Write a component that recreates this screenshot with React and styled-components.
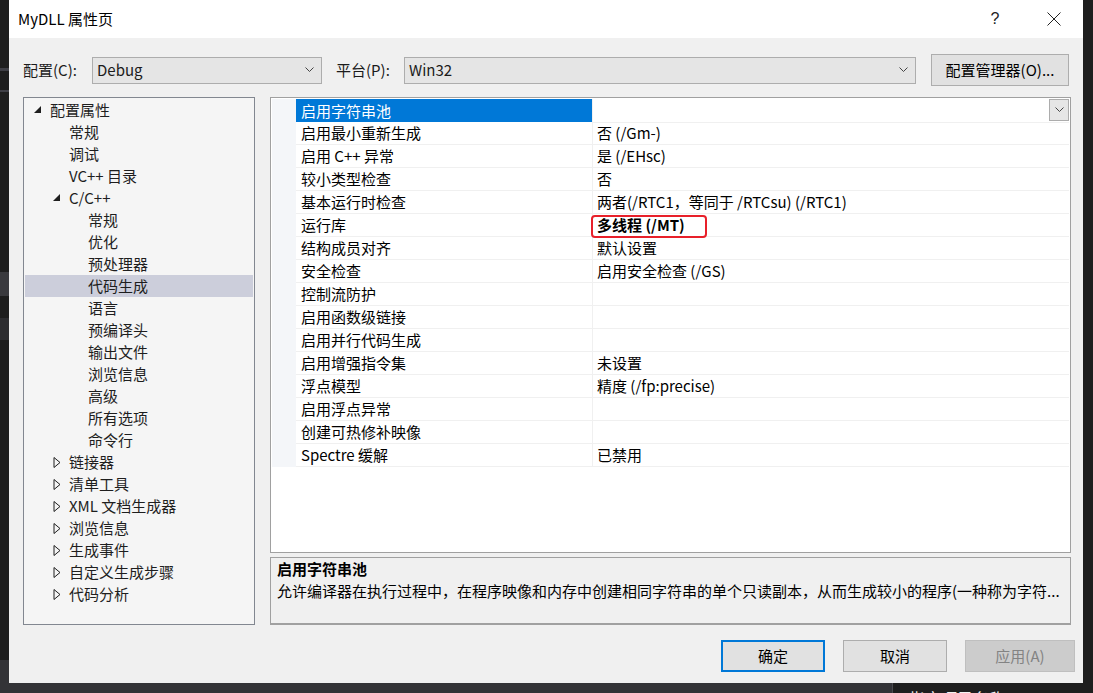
import React from "react";
import styled, { createGlobalStyle } from "styled-components";

const FONT = `"Noto Sans CJK SC", "Noto Sans", "Liberation Sans", sans-serif`;

const Global = createGlobalStyle`
  html, body { margin: 0; padding: 0; background: #1e1e1e; }
  body { font-family: ${FONT}; }
  #root { width: 1093px; height: 693px; }
  * { box-sizing: border-box; }
`;

const Desktop = styled.div`
  position: relative;
  width: 1093px;
  height: 693px;
  overflow: hidden;
  background: #1e1e1e;
`;

const BackStrip = styled.div`
  position: absolute;
  left: 0;
  top: ${(p) => p.$top}px;
  width: ${(p) => p.$w}px;
  height: ${(p) => p.$h}px;
  background: ${(p) => p.$bg};
`;

const BackBottom = styled.div`
  position: absolute;
  left: 0;
  top: 683px;
  width: 1093px;
  height: 10px;
  display: flex;
  overflow: hidden;
`;

const BackBottomLeft = styled.div`
  width: 893px;
  background: #333337;
  border-right: 1px solid #4a4a4f;
`;

const BackBottomRight = styled.div`
  flex: 1;
  background: #1e1e1e;
  color: #f1f1f1;
  font-size: 16px;
  line-height: 22px;
  padding-left: 16px;
  padding-top: 4px;
  white-space: nowrap;
  overflow: hidden;
`;

const Dialog = styled.div`
  position: absolute;
  left: 9px;
  top: 0;
  width: 1074px;
  height: 683px;
  background: #f0f0f0;
  display: flex;
  flex-direction: column;
  font-family: ${FONT};
  color: #1b1b1b;
`;

const TitleBar = styled.div`
  height: 38px;
  flex: none;
  background: #ffffff;
  display: flex;
  align-items: center;
  padding-left: 9px;
  padding-right: 6px;
  gap: 13px;
`;

const Title = styled.div`
  flex: 1;
  font-size: 15px;
  line-height: 20px;
  padding-bottom: 1px;
  color: #000;
`;

const TitleButton = styled.div`
  width: 46px;
  height: 38px;
  display: flex;
  align-items: center;
  justify-content: center;
  font-size: 16px;
  color: #222;
  font-family: "Liberation Sans", sans-serif;
`;

const Body = styled.div`
  flex: 1;
  display: flex;
  flex-direction: column;
  padding: 16px 12px 11px 14px;
`;

const ConfigRow = styled.div`
  height: 32px;
  flex: none;
  display: flex;
  align-items: center;
`;

const Label = styled.div`
  flex: none;
  width: ${(p) => p.$w}px;
  margin-left: ${(p) => p.$ml || 0}px;
  font-size: 15px;
  line-height: 20px;
  padding-bottom: 1px;
`;

const Combo = styled.div`
  flex: none;
  width: ${(p) => p.$w}px;
  height: 27px;
  background: #e5e5e5;
  border: 1px solid #adadad;
  display: flex;
  align-items: center;
  padding: 0 7px 0 4px;
  font-size: 15px;
`;

const ComboText = styled.div`
  flex: 1;
  line-height: 20px;
  padding-bottom: 1px;
`;

const Button = styled.div`
  flex: none;
  width: ${(p) => p.$w}px;
  height: 32px;
  margin-left: ${(p) => p.$ml || 0}px;
  display: flex;
  align-items: center;
  justify-content: center;
  font-size: 15px;
  line-height: 20px;
  white-space: nowrap;
  background: ${(p) => (p.$disabled ? "#cccccc" : "#e1e1e1")};
  color: ${(p) => (p.$disabled ? "#838383" : "#000")};
  border: ${(p) =>
    p.$primary ? "2px solid #0078d7" : p.$disabled ? "1px solid #bfbfbf" : "1px solid #adadad"};
`;

const Main = styled.div`
  margin-top: 11px;
  height: 528px;
  flex: none;
  display: flex;
  gap: 15px;
`;

const Tree = styled.div`
  flex: none;
  width: 232px;
  border: 1px solid #828790;
  background: #f5f5f5;
  padding: 1px;
`;

const TreeRow = styled.div`
  height: 22px;
  display: flex;
  align-items: center;
  padding-left: ${(p) => 9 + p.$level * 19}px;
  padding-bottom: 1px;
  background: ${(p) => (p.$selected ? "#cccedb" : "transparent")};
  font-size: 15px;
  color: #1e1e1e;
  white-space: nowrap;
`;

const Arrow = styled.div`
  flex: none;
  width: 16px;
  height: 22px;
  padding-top: 1px;
  display: flex;
  align-items: center;
`;

const RightCol = styled.div`
  flex: 1;
  min-width: 0;
  display: flex;
  flex-direction: column;
  gap: 4px;
`;

const Grid = styled.div`
  height: 456px;
  flex: none;
  border: 1px solid #a0a0a0;
  background: #ffffff;
  padding: 1px;
`;

const GridRow = styled.div`
  height: 23px;
  display: grid;
  grid-template-columns: 24px 297px 1fr;
  font-size: 15px;
`;

const Margin = styled.div`
  background: #f4f6f9;
`;

const NameCell = styled.div`
  border-right: 1px solid #f0f0f0;
  border-bottom: 1px solid #f0f0f0;
  padding: 0 0 1px 5px;
  display: flex;
  align-items: center;
  background: ${(p) => (p.$selected ? "#0078d7" : "#fff")};
  color: ${(p) => (p.$selected ? "#fff" : "#000")};
  white-space: nowrap;
`;

const ValueCell = styled.div`
  position: relative;
  border-bottom: 1px solid #f0f0f0;
  padding: 0 0 1px 4px;
  display: flex;
  align-items: center;
  color: #000;
  font-weight: ${(p) => (p.$bold ? 700 : 400)};
  white-space: nowrap;
`;

const ValueText = styled.div`
  flex: 1;
`;

const DropButton = styled.div`
  width: 20px;
  height: 22px;
  background: #e6e6e6;
  border: 1px solid #acacac;
  display: flex;
  align-items: center;
  justify-content: center;
`;

const Highlight = styled.div`
  position: absolute;
  left: -2px;
  top: 1px;
  width: 116px;
  height: 23px;
  border: 2px solid #e8202a;
  border-radius: 4px;
  pointer-events: none;
`;

const Desc = styled.div`
  flex: 1;
  min-width: 0;
  border: 1px solid #a0a0a0;
  border-bottom: 2px solid #a0a0a0;
  background: #f0f0f0;
  padding: 0 6px 0 6px;
  font-size: 15px;
`;

const DescTitle = styled.div`
  font-weight: 700;
  line-height: 22px;
  color: #000;
`;

const DescText = styled.div`
  line-height: 22px;
  white-space: nowrap;
  overflow: hidden;
  color: #000;
`;

const Footer = styled.div`
  margin-top: 15px;
  margin-right: -4px;
  display: flex;
  justify-content: flex-end;
  gap: 18px;
`;

const Chevron = ({ w = 9 }) => (
  <svg width={w} height="6" viewBox="0 0 9 6">
    <polyline points="0.5,0.5 4.5,4.5 8.5,0.5" fill="none" stroke="#444" strokeWidth="1" />
  </svg>
);

const Expanded = () => (
  <svg width="8" height="8" viewBox="0 0 8 8">
    <polygon points="7,0 7,7 0,7" fill="#1e1e1e" />
  </svg>
);

const Collapsed = () => (
  <svg width="8" height="11" viewBox="0 0 8 11">
    <polygon points="1,0.5 7,5.5 1,10.5" fill="none" stroke="#1e1e1e" strokeWidth="1" />
  </svg>
);

const CloseIcon = () => (
  <svg width="14" height="14" viewBox="0 0 14 14">
    <path d="M0.5 0.5 L13.5 13.5 M13.5 0.5 L0.5 13.5" stroke="#222" strokeWidth="1" />
  </svg>
);

const tree = [
  { t: "配置属性", l: 0, a: "e" },
  { t: "常规", l: 1 },
  { t: "调试", l: 1 },
  { t: "VC++ 目录", l: 1 },
  { t: "C/C++", l: 1, a: "e" },
  { t: "常规", l: 2 },
  { t: "优化", l: 2 },
  { t: "预处理器", l: 2 },
  { t: "代码生成", l: 2, s: true },
  { t: "语言", l: 2 },
  { t: "预编译头", l: 2 },
  { t: "输出文件", l: 2 },
  { t: "浏览信息", l: 2 },
  { t: "高级", l: 2 },
  { t: "所有选项", l: 2 },
  { t: "命令行", l: 2 },
  { t: "链接器", l: 1, a: "c" },
  { t: "清单工具", l: 1, a: "c" },
  { t: "XML 文档生成器", l: 1, a: "c" },
  { t: "浏览信息", l: 1, a: "c" },
  { t: "生成事件", l: 1, a: "c" },
  { t: "自定义生成步骤", l: 1, a: "c" },
  { t: "代码分析", l: 1, a: "c" },
];

const props = [
  ["启用字符串池", ""],
  ["启用最小重新生成", "否 (/Gm-)"],
  ["启用 C++ 异常", "是 (/EHsc)"],
  ["较小类型检查", "否"],
  ["基本运行时检查", "两者(/RTC1，等同于 /RTCsu) (/RTC1)"],
  ["运行库", "多线程 (/MT)"],
  ["结构成员对齐", "默认设置"],
  ["安全检查", "启用安全检查 (/GS)"],
  ["控制流防护", ""],
  ["启用函数级链接", ""],
  ["启用并行代码生成", ""],
  ["启用增强指令集", "未设置"],
  ["浮点模型", "精度 (/fp:precise)"],
  ["启用浮点异常", ""],
  ["创建可热修补映像", ""],
  ["Spectre 缓解", "已禁用"],
];

export default function App() {
  return (
    <Desktop>
      <Global />
      <BackStrip $top={68} $w={9} $h={3} $bg="#3f3f46" />
      <BackStrip $top={90} $w={9} $h={2} $bg="#3f3f46" />
      <BackStrip $top={272} $w={9} $h={24} $bg="#3a3a3e" />
      <BackStrip $top={318} $w={9} $h={22} $bg="#2d2d30" />
      <BackStrip $top={660} $w={9} $h={33} $bg="#333337" />
      <BackBottom>
        <BackBottomLeft />
        <BackBottomRight>指定项目名称</BackBottomRight>
      </BackBottom>
      <Dialog>
        <TitleBar>
          <Title>MyDLL 属性页</Title>
          <TitleButton>?</TitleButton>
          <TitleButton>
            <CloseIcon />
          </TitleButton>
        </TitleBar>
        <Body>
          <ConfigRow>
            <Label $w={69}>配置(C):</Label>
            <Combo $w={230}>
              <ComboText>Debug</ComboText>
              <Chevron />
            </Combo>
            <Label $w={68} $ml={14}>平台(P):</Label>
            <Combo $w={512}>
              <ComboText>Win32</ComboText>
              <Chevron />
            </Combo>
            <Button $w={138} $ml={15}>配置管理器(O)...</Button>
          </ConfigRow>
          <Main>
            <Tree>
              {tree.map((n, i) => (
                <TreeRow key={i} $level={n.l} $selected={n.s}>
                  <Arrow>{n.a === "e" ? <Expanded /> : n.a === "c" ? <Collapsed /> : null}</Arrow>
                  {n.t}
                </TreeRow>
              ))}
            </Tree>
            <RightCol>
              <Grid>
                {props.map(([name, value], i) => (
                  <GridRow key={i}>
                    <Margin />
                    <NameCell $selected={i === 0}>{name}</NameCell>
                    <ValueCell $bold={i === 5}>
                      <ValueText>{value}</ValueText>
                      {i === 0 && (
                        <DropButton>
                          <Chevron w={9} />
                        </DropButton>
                      )}
                      {i === 5 && <Highlight />}
                    </ValueCell>
                  </GridRow>
                ))}
              </Grid>
              <Desc>
                <DescTitle>启用字符串池</DescTitle>
                <DescText>
                  允许编译器在执行过程中，在程序映像和内存中创建相同字符串的单个只读副本，从而生成较小的程序(一种称为字符...
                </DescText>
              </Desc>
            </RightCol>
          </Main>
          <Footer>
            <Button $w={104} $primary>确定</Button>
            <Button $w={104}>取消</Button>
            <Button $w={110} $disabled>应用(A)</Button>
          </Footer>
        </Body>
      </Dialog>
    </Desktop>
  );
}
